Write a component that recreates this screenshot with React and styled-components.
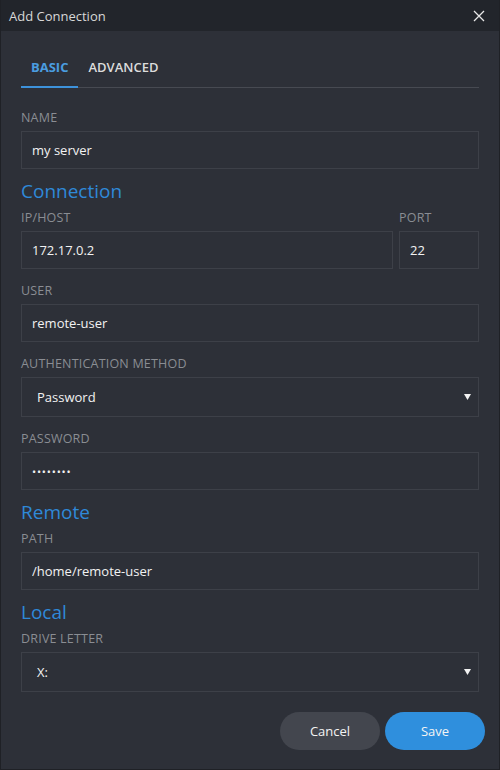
import React, { useState } from "react";
import styled, { createGlobalStyle } from "styled-components";

const GlobalStyle = createGlobalStyle`
    html, body {
        margin: 0;
        padding: 0;
        background: #2d3038;
    }
    * {
        box-sizing: border-box;
    }
`;

const App = () => {
    const [tab, setTab] = useState("basic");

    return (
        <>
            <GlobalStyle />
            <Dialog>
                <TitleBar>
                    <Title>Add Connection</Title>
                    <CloseButton aria-label="close">
                        <svg width="12" height="12" viewBox="0 0 12 12">
                            <path d="M1 1L11 11M11 1L1 11" stroke="#e8e8e8" strokeWidth="1.3" />
                        </svg>
                    </CloseButton>
                </TitleBar>
                <Body>
                    <TabBar>
                        <Tab active={tab === "basic"} onClick={() => setTab("basic")}>BASIC</Tab>
                        <Tab active={tab === "advanced"} onClick={() => setTab("advanced")}>ADVANCED</Tab>
                    </TabBar>

                    <Field>
                        <Label>NAME</Label>
                        <Input defaultValue="my server" />
                    </Field>

                    <Heading>Connection</Heading>
                    <Row>
                        <Field grow>
                            <Label>IP/HOST</Label>
                            <Input defaultValue="172.17.0.2" />
                        </Field>
                        <Field width="80px">
                            <Label>PORT</Label>
                            <Input defaultValue="22" />
                        </Field>
                    </Row>
                    <Field>
                        <Label>USER</Label>
                        <Input defaultValue="remote-user" />
                    </Field>
                    <Field>
                        <Label>AUTHENTICATION METHOD</Label>
                        <Select value="Password" />
                    </Field>
                    <Field>
                        <Label>PASSWORD</Label>
                        <Input type="password" defaultValue="password" />
                    </Field>

                    <Heading>Remote</Heading>
                    <Field>
                        <Label>PATH</Label>
                        <Input defaultValue="/home/remote-user" />
                    </Field>

                    <Heading>Local</Heading>
                    <Field>
                        <Label>DRIVE LETTER</Label>
                        <Select value="X:" />
                    </Field>

                    <Actions>
                        <Button>Cancel</Button>
                        <Button primary>Save</Button>
                    </Actions>
                </Body>
            </Dialog>
        </>
    );
};

const Select = ({ value }) => (
    <SelectBox>
        <span>{value}</span>
        <svg width="7" height="6" viewBox="0 0 7 6">
            <path d="M0 0H7L3.5 6Z" fill="#f2f2f2" />
        </svg>
    </SelectBox>
);

const Dialog = styled.div`
    width: 500px;
    height: 770px;
    display: flex;
    flex-direction: column;
    background: #2d3038;
    border: 1px solid #1f2126;
    border-top: none;
    font-family: "Open Sans", "Noto Sans", sans-serif;
    color: #ececec;
`;

const TitleBar = styled.div`
    height: 31px;
    flex-shrink: 0;
    display: flex;
    align-items: center;
    justify-content: space-between;
    padding: 0 14px 0 8px;
    background: #22252b;
`;

const Title = styled.span`
    font-size: 13px;
    color: #d8d8d8;
`;

const CloseButton = styled.button`
    display: flex;
    align-items: center;
    background: none;
    border: none;
    padding: 0;
    cursor: pointer;
`;

const Body = styled.div`
    flex: 1;
    display: flex;
    flex-direction: column;
    padding: 17px 20px 0 20px;
`;

const TabBar = styled.div`
    display: flex;
    height: 40px;
    border-bottom: 1px solid #474a52;
    margin-bottom: 22px;
`;

const Tab = styled.div`
    display: flex;
    align-items: center;
    padding: 0 10px;
    margin-bottom: -1px;
    font-size: 13px;
    font-weight: ${props => (props.active ? 700 : 600)};
    color: ${props => (props.active ? "#4a9de0" : "#dcdcdc")};
    border-bottom: 2px solid ${props => (props.active ? "#3d92db" : "transparent")};
    cursor: pointer;
`;

const Field = styled.div`
    display: flex;
    flex-direction: column;
    margin-bottom: 14px;
    flex: ${props => (props.grow ? 1 : "none")};
    width: ${props => props.width || "auto"};
`;

const Row = styled.div`
    display: flex;
    gap: 6px;
`;

const Label = styled.label`
    font-size: 12.5px;
    line-height: 16px;
    letter-spacing: 0.2px;
    color: #8a8d93;
    margin-bottom: 5px;
`;

const Input = styled.input`
    height: 38px;
    width: 100%;
    padding: 0 10px;
    background: #2d3038;
    border: 1px solid #3d4048;
    color: #f2f2f2;
    font-family: inherit;
    font-size: 13px;
    outline: none;

    &[type="password"] {
        font-size: 11px;
        letter-spacing: 0.8px;
    }
`;

const SelectBox = styled.div`
    height: 40px;
    display: flex;
    align-items: center;
    justify-content: space-between;
    padding: 0 7px 0 15px;
    border: 1px solid #3d4048;
    font-size: 13px;
    color: #f2f2f2;
`;

const Heading = styled.h2`
    margin: 0 0 11px 0;
    font-size: 19px;
    line-height: 16px;
    font-weight: 400;
    color: #2f89d8;
`;

const Actions = styled.div`
    display: flex;
    justify-content: flex-end;
    gap: 5px;
    margin: 6px -6px 0 0;
`;

const Button = styled.button`
    width: 100px;
    height: 38px;
    border: none;
    border-radius: 19px;
    font-family: inherit;
    font-size: 13px;
    color: #f4f4f4;
    background: ${props => (props.primary ? "#2f8fdd" : "#43464e")};
    cursor: pointer;
`;

export default App;
